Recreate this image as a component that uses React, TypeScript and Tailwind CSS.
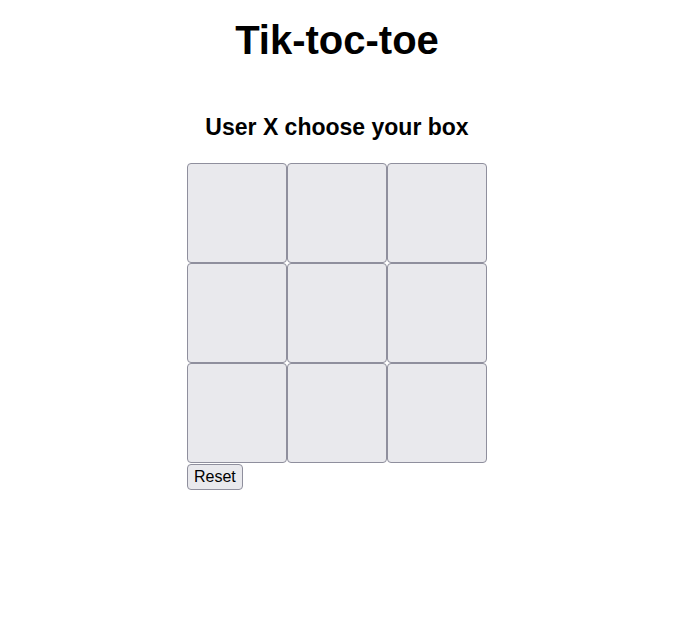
import * as React from "react"

export default function App() {
  const [board, setBoard] = React.useState<(string | null)[]>(Array(9).fill(null))
  const [player, setPlayer] = React.useState("X")

  const choose = (i: number) => {
    if (board[i]) return
    const next = board.slice()
    next[i] = player
    setBoard(next)
    setPlayer(player === "X" ? "O" : "X")
  }

  return (
    <div className="flex flex-col items-center pr-2 font-['Liberation_Sans',Arial,sans-serif] text-black">
      <h1 className="mt-[17px] text-[40px] font-bold leading-[46px]">Tik-toc-toe</h1>
      <h2 className="mt-[52px] text-[23px] font-bold leading-[25px]">User {player} choose your box</h2>
      <div className="mt-[23px] flex flex-col items-start">
        <div className="grid grid-cols-[repeat(3,100px)]">
          {board.map((cell, i) => (
            <button
              key={i}
              onClick={() => choose(i)}
              className="h-[100px] w-[100px] rounded-[4px] border border-[#8f8f9d] bg-[#e9e9ed] text-4xl"
            >
              {cell}
            </button>
          ))}
        </div>
        <button
          onClick={() => {
            setBoard(Array(9).fill(null))
            setPlayer("X")
          }}
          className="mt-px h-[26px] rounded-[4px] border border-[#8f8f9d] bg-[#e9e9ed] px-[6px] text-[16px] leading-[24px]"
        >
          Reset
        </button>
      </div>
    </div>
  )
}
